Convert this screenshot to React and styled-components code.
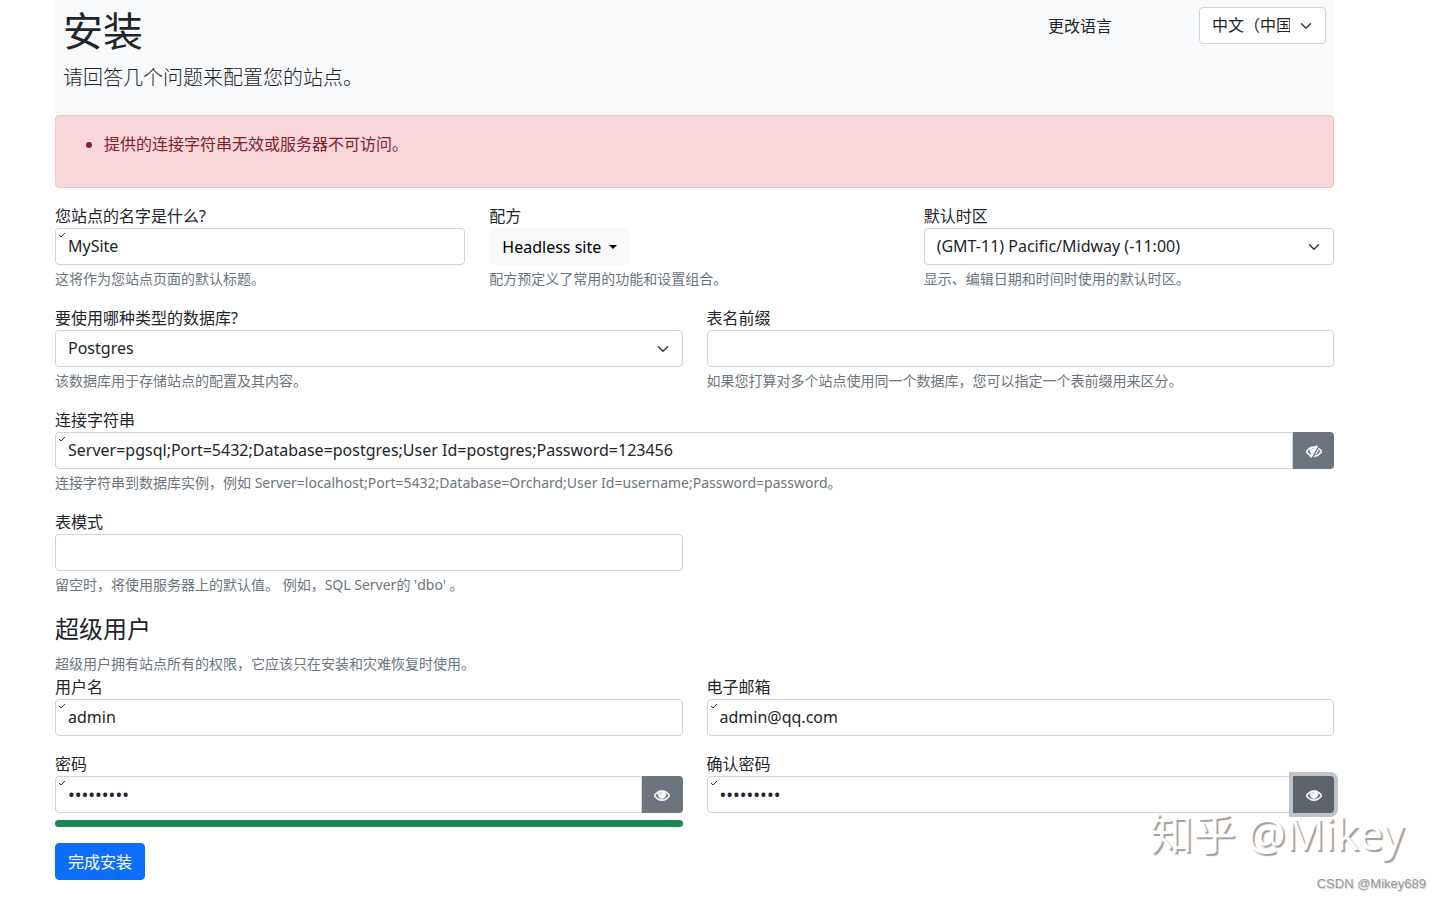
import React, { useState } from 'react';
import styled, { createGlobalStyle } from 'styled-components';

const GlobalStyle = createGlobalStyle`
  *, *::before, *::after {
    box-sizing: border-box;
  }

  body {
    margin: 0;
    background-color: #fff;
    color: #212529;
    font-family: 'Noto Sans', 'Noto Sans CJK SC', sans-serif;
    font-size: 16px;
    font-weight: 400;
    line-height: 24px;
  }

  input, select, button {
    font-family: inherit;
    font-size: inherit;
    line-height: inherit;
  }
`;

const Page = styled.div`
  position: relative;
  padding: 0 106px 20px 55px;
`;

const Header = styled.header`
  display: flex;
  align-items: flex-start;
  justify-content: space-between;
  padding: 7px 8px 22px;
  background-color: #f8f9fa;

  h1 {
    margin: 0 0 8px;
    font-size: 40px;
    font-weight: 400;
    line-height: 48px;
  }

  p {
    margin: 0;
    font-size: 20px;
    font-weight: 300;
    line-height: 30px;
  }
`;

const Culture = styled.div`
  display: grid;
  grid-template-columns: 127px 127px;
  align-items: center;
  gap: 24px;
`;

const Alert = styled.div`
  padding: 16px;
  border: 1px solid #f1c2c7;
  border-radius: 4px;
  background-color: #f8d7da;
  color: #842029;

  ul {
    margin: 0 0 15px;
    padding-left: 32px;
  }
`;

const Form = styled.form`
  margin-top: 16px;
`;

const Row = styled.div`
  display: grid;
  grid-template-columns: repeat(${({ $cols }) => $cols}, 1fr);
  gap: 24px;
  margin-bottom: 16px;
`;

const Label = styled.label`
  display: block;
`;

const Hint = styled.span`
  display: block;
  margin-top: ${({ $lead }) => ($lead ? 0 : '3px')};
  margin-bottom: 1px;
  color: #6c757d;
  font-size: 14px;
  line-height: 21px;
`;

const Control = styled.div`
  position: relative;
  display: flex;
`;

const Input = styled.input`
  flex: 1;
  min-width: 0;
  height: 37px;
  padding: 0 12px 1px;
  border: 1px solid #ced4da;
  border-radius: ${({ $grouped }) => ($grouped ? '4px 0 0 4px' : '4px')};
  background-color: #fff;
  color: #212529;
  outline: 0;

  &[type='password'] {
    font-size: 18px;
  }
`;

const Select = styled.select`
  flex: 1;
  min-width: 0;
  height: 37px;
  padding: 0 35px 1px 12px;
  border: 1px solid #ced4da;
  border-radius: 4px;
  background-color: #fff;
  color: #212529;
  appearance: none;
`;

const Chevron = styled.svg`
  position: absolute;
  top: 13px;
  right: 12px;
  width: 16px;
  height: 12px;
  pointer-events: none;
`;

const Check = styled.svg`
  position: absolute;
  top: 3px;
  left: 3px;
  width: 8px;
  height: 8px;
  pointer-events: none;
`;

const ToggleButton = styled.button`
  display: flex;
  align-items: center;
  justify-content: center;
  width: 41px;
  height: 37px;
  padding: 0;
  border: 0;
  border-radius: 0 4px 4px 0;
  background-color: ${({ $focused }) => ($focused ? '#5c636a' : '#6c757d')};
  box-shadow: ${({ $focused }) => ($focused ? '0 0 0 4px #c0c4c8' : 'none')};
  color: #fff;
  cursor: pointer;
`;

const RecipeButton = styled.button`
  display: inline-flex;
  align-items: center;
  gap: 8px;
  height: 37px;
  padding: 0 13px;
  border: 0;
  border-radius: 4px;
  background-color: #f8f9fa;
  color: #000;
  cursor: pointer;

  &::after {
    content: '';
    border-top: 4px solid;
    border-right: 4px solid transparent;
    border-left: 4px solid transparent;
  }
`;

const SectionTitle = styled.h2`
  margin: 0 0 7px;
  font-size: 24px;
  font-weight: 400;
  line-height: 34px;
`;

const Strength = styled.div`
  height: 7px;
  margin-top: 7px;
  border-radius: 4px;
  background-color: #198754;
`;

const SubmitButton = styled.button`
  height: 37px;
  padding: 0 12px;
  border: 1px solid #0d6efd;
  border-radius: 4px;
  background-color: #0d6efd;
  color: #fff;
  cursor: pointer;
`;

const Watermark = styled.div`
  position: absolute;
  right: 36px;
  bottom: 42px;
  color: #fff;
  font-size: 43px;
  line-height: 48px;
  text-shadow: 2px 2px 1px #a0a0a0;
  pointer-events: none;
`;

const Credit = styled.div`
  position: absolute;
  right: 14px;
  bottom: 8px;
  color: #999;
  font-family: 'Liberation Sans', sans-serif;
  font-size: 13px;
  line-height: 16px;
  text-shadow: 1px 1px 1px #ccc;
  pointer-events: none;
`;

const Icon = styled.svg`
  width: 16px;
  height: 16px;
  fill: currentColor;
  stroke: currentColor;
  stroke-width: 60px;
`;

const EyeIcon = () => (
  <Icon viewBox="0 0 1792 1792" aria-hidden="true">
    <path d="M1664 960q-152-236-381-353 61 104 61 225 0 185-131.500 316.500t-316.500 131.500-316.500-131.500-131.500-316.500q0-121 61-225-229 117-381 353 133 205 333.500 326.500t434.500 121.500 434.500-121.500 333.500-326.500zm-720-384q0-20-14-34t-34-14q-125 0-214.500 89.500t-89.500 214.500q0 20 14 34t34 14 34-14 14-34q0-86 61-147t147-61q20 0 34-14t14-34zm848 384q0 34-20 69-140 230-376.500 368.500t-499.500 138.500-499.500-139-376.500-368q-20-35-20-69t20-69q140-229 376.500-368t499.500-139 499.500 139 376.500 368q20 35 20 69z" />
  </Icon>
);

const EyeSlashIcon = () => (
  <Icon viewBox="0 0 1792 1792" aria-hidden="true">
    <path d="M555 1335l78-141q-87-63-136-159t-49-203q0-121 61-225-229 117-381 353 167 258 427 375zm389-759q0-20-14-34t-34-14q-125 0-214.500 89.500t-89.500 214.500q0 20 14 34t34 14 34-14 14-34q0-86 61-147t147-61q20 0 34-14t14-34zm363-191q0 7-1 9-106 189-316 567t-315 566l-49 89q-10 16-28 16-12 0-134-70-16-10-16-28 0-12 44-87-143-65-263.500-173t-208.500-245q-20-31-20-69t20-69q153-235 380-371t496-136q89 0 180 17l54-97q10-16 28-16 5 0 18 6t31 15.500 33 18.500 31.500 18.500 19.500 11.500q16 10 16 27zm37 447q0 139-79 253.500t-209 164.500l280-502q8 45 8 84zm448 128q0 35-20 69-39 64-109 145-150 172-347.500 267t-419.500 95l74-132q212-18 392.500-137t301.500-307q-115-179-282-294l63-112q95 64 182.500 153t144.500 184q20 34 20 69z" />
  </Icon>
);

const SelectBox = ({ id, options, ...rest }) => (
  <Control>
    <Select id={id} {...rest}>
      {options.map((option) => (
        <option key={option}>{option}</option>
      ))}
    </Select>
    <Chevron viewBox="0 0 16 16" fill="none" stroke="#343a40" strokeWidth="2">
      <path strokeLinecap="round" strokeLinejoin="round" d="M2 5l6 6 6-6" />
    </Chevron>
  </Control>
);

const TextBox = ({ id, value = '', type = 'text', checked, children }) => (
  <Control>
    <Input id={id} name={id} type={type} defaultValue={value} $grouped={Boolean(children)} />
    {checked && (
      <Check viewBox="0 0 8 8" fill="none" stroke="#343a40">
        <path d="M1 4l2 2 4-4" />
      </Check>
    )}
    {children}
  </Control>
);

const Field = ({ id, label, hint, children }) => (
  <div>
    <Label htmlFor={id}>{label}</Label>
    {children}
    {hint && <Hint>{hint}</Hint>}
  </div>
);

const SecretField = ({ id, label, hint, value, shown, focused, children }) => {
  const [visible, setVisible] = useState(Boolean(shown));

  return (
    <div>
      <Label htmlFor={id}>{label}</Label>
      <TextBox id={id} value={value} type={visible ? 'text' : 'password'} checked>
        <ToggleButton
          type="button"
          aria-label={label}
          $focused={focused}
          onClick={() => setVisible(!visible)}
        >
          {visible ? <EyeSlashIcon /> : <EyeIcon />}
        </ToggleButton>
      </TextBox>
      {hint && <Hint>{hint}</Hint>}
      {children}
    </div>
  );
};

const App = () => (
  <React.Fragment>
    <GlobalStyle />
    <Page>
      <Header>
        <div>
          <h1>安装</h1>
          <p>请回答几个问题来配置您的站点。</p>
        </div>
        <Culture>
          <label htmlFor="culture">更改语言</label>
          <SelectBox id="culture" options={['中文（中国）']} />
        </Culture>
      </Header>
      <Alert role="alert">
        <ul>
          <li>提供的连接字符串无效或服务器不可访问。</li>
        </ul>
      </Alert>
      <Form onSubmit={(e) => e.preventDefault()}>
        <Row $cols={3}>
          <Field id="siteName" label="您站点的名字是什么?" hint="这将作为您站点页面的默认标题。">
            <TextBox id="siteName" value="MySite" checked />
          </Field>
          <Field id="recipe" label="配方" hint="配方预定义了常用的功能和设置组合。">
            <RecipeButton id="recipe" type="button">
              Headless site
            </RecipeButton>
          </Field>
          <Field id="timeZone" label="默认时区" hint="显示、编辑日期和时间时使用的默认时区。">
            <SelectBox id="timeZone" options={['(GMT-11) Pacific/Midway (-11:00)']} />
          </Field>
        </Row>
        <Row $cols={2}>
          <Field id="provider" label="要使用哪种类型的数据库?" hint="该数据库用于存储站点的配置及其内容。">
            <SelectBox id="provider" options={['Postgres']} />
          </Field>
          <Field
            id="tablePrefix"
            label="表名前缀"
            hint="如果您打算对多个站点使用同一个数据库，您可以指定一个表前缀用来区分。"
          >
            <TextBox id="tablePrefix" />
          </Field>
        </Row>
        <Row $cols={1}>
          <SecretField
            id="connectionString"
            label="连接字符串"
            value="Server=pgsql;Port=5432;Database=postgres;User Id=postgres;Password=123456"
            hint="连接字符串到数据库实例，例如 Server=localhost;Port=5432;Database=Orchard;User Id=username;Password=password。"
            shown
          />
        </Row>
        <Row $cols={2}>
          <Field id="schema" label="表模式" hint="留空时，将使用服务器上的默认值。 例如，SQL Server的 'dbo' 。">
            <TextBox id="schema" />
          </Field>
        </Row>
        <SectionTitle>超级用户</SectionTitle>
        <Hint $lead>超级用户拥有站点所有的权限，它应该只在安装和灾难恢复时使用。</Hint>
        <Row $cols={2}>
          <Field id="userName" label="用户名">
            <TextBox id="userName" value="admin" checked />
          </Field>
          <Field id="email" label="电子邮箱">
            <TextBox id="email" value="admin@qq.com" checked />
          </Field>
        </Row>
        <Row $cols={2}>
          <SecretField id="password" label="密码" value="Admin@123">
            <Strength />
          </SecretField>
          <SecretField id="passwordConfirmation" label="确认密码" value="Admin@123" focused />
        </Row>
        <SubmitButton type="submit">完成安装</SubmitButton>
      </Form>
      <Watermark>知乎 @Mikey</Watermark>
      <Credit>CSDN @Mikey689</Credit>
    </Page>
  </React.Fragment>
);

export default App;
